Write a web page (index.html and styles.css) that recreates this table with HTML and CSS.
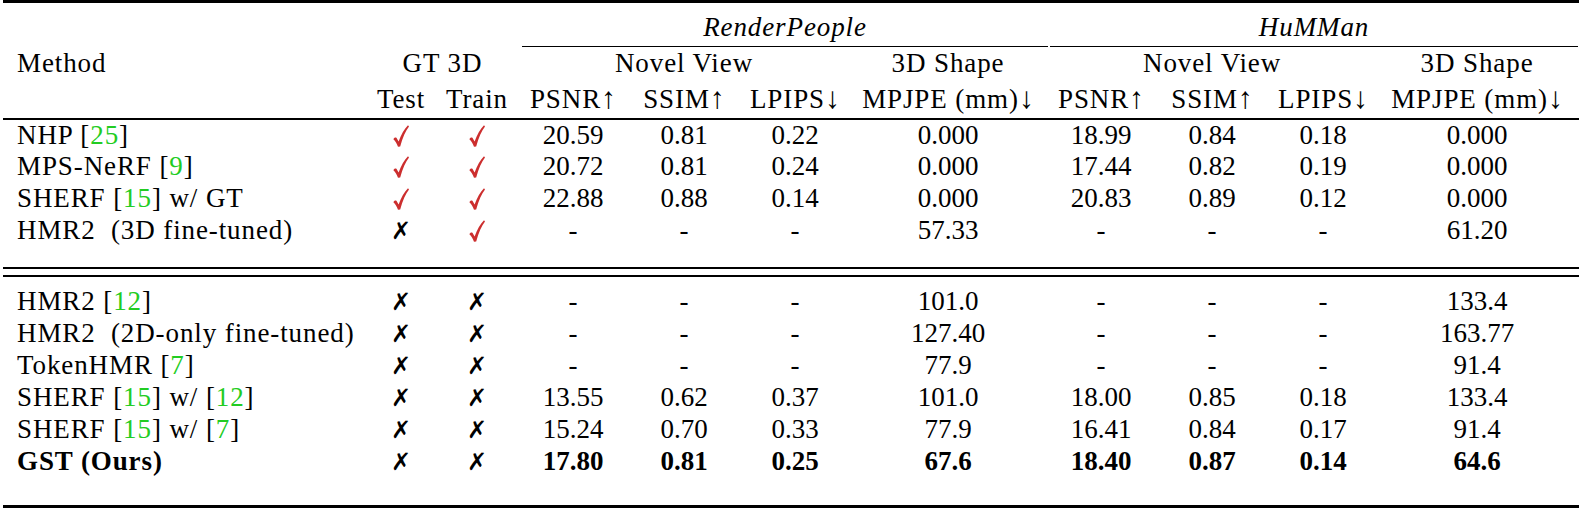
FILE: index.html
```html
<!DOCTYPE html>
<html lang="en">
<head>
    <meta charset="UTF-8">
    <meta name="viewport" content="width=device-width, initial-scale=1.0">
    <title>Novel view and 3D shape results</title>
    <link rel="stylesheet" href="styles.css">
</head>
<body>
    <!-- red check mark, reused in every "yes" cell -->
    <svg class="defs" width="0" height="0">
        <symbol id="check" viewBox="0 0 16 22">
            <path d="M0.4,14.2 C1,12.6 2.6,11.9 3.6,12.9 L5.6,16.4 C8,10 11.2,4.2 15,0.3 L16,1.4 C12.6,5.8 9.6,12.4 7.2,21.4 L5,21.7 C3.8,18.6 2.4,15.8 0.4,14.2 Z"/>
        </symbol>
    </svg>

    <table class="results">
        <colgroup>
            <col class="c-method">
            <col class="c-test">
            <col class="c-train">
            <col class="c-psnr">
            <col class="c-ssim">
            <col class="c-lpips">
            <col class="c-mpjpe">
            <col class="c-psnr">
            <col class="c-ssim">
            <col class="c-lpips">
            <col class="c-mpjpe-last">
        </colgroup>
        <thead>
            <tr class="row-dataset">
                <th colspan="3"></th>
                <th colspan="4" class="dataset"><div>RenderPeople</div></th>
                <th colspan="4" class="dataset"><div>HuMMan</div></th>
            </tr>
            <tr class="row-group">
                <th class="method">Method</th>
                <th colspan="2" class="gt">GT 3D</th>
                <th colspan="3">Novel View</th>
                <th>3D Shape</th>
                <th colspan="3">Novel View</th>
                <th>3D Shape</th>
            </tr>
            <tr class="row-metric">
                <th class="method"></th>
                <th>Test</th>
                <th class="train">Train</th>
                <th>PSNR<span class="arrow">↑</span></th>
                <th>SSIM<span class="arrow">↑</span></th>
                <th>LPIPS<span class="arrow">↓</span></th>
                <th>MPJPE (mm)<span class="arrow">↓</span></th>
                <th>PSNR<span class="arrow">↑</span></th>
                <th>SSIM<span class="arrow">↑</span></th>
                <th>LPIPS<span class="arrow">↓</span></th>
                <th>MPJPE (mm)<span class="arrow">↓</span></th>
            </tr>
        </thead>

        <!-- methods trained with 3D ground truth -->
        <tbody class="block-top">
            <tr>
                <td class="method">NHP [<span class="cite">25</span>]</td>
                <td><svg class="yes"><use href="#check"/></svg></td>
                <td class="train"><svg class="yes"><use href="#check"/></svg></td>
                <td>20.59</td><td>0.81</td><td>0.22</td><td>0.000</td>
                <td>18.99</td><td>0.84</td><td>0.18</td><td>0.000</td>
            </tr>
            <tr>
                <td class="method">MPS-NeRF [<span class="cite">9</span>]</td>
                <td><svg class="yes"><use href="#check"/></svg></td>
                <td class="train"><svg class="yes"><use href="#check"/></svg></td>
                <td>20.72</td><td>0.81</td><td>0.24</td><td>0.000</td>
                <td>17.44</td><td>0.82</td><td>0.19</td><td>0.000</td>
            </tr>
            <tr>
                <td class="method">SHERF [<span class="cite">15</span>] w/ GT</td>
                <td><svg class="yes"><use href="#check"/></svg></td>
                <td class="train"><svg class="yes"><use href="#check"/></svg></td>
                <td>22.88</td><td>0.88</td><td>0.14</td><td>0.000</td>
                <td>20.83</td><td>0.89</td><td>0.12</td><td>0.000</td>
            </tr>
            <tr>
                <td class="method">HMR2&nbsp; (3D fine-tuned)</td>
                <td><span class="no">✗</span></td>
                <td class="train"><svg class="yes"><use href="#check"/></svg></td>
                <td>-</td><td>-</td><td>-</td><td>57.33</td>
                <td>-</td><td>-</td><td>-</td><td>61.20</td>
            </tr>
        </tbody>

        <tbody class="double-rule">
            <tr><td colspan="11"></td></tr>
        </tbody>

        <!-- methods without 3D ground truth -->
        <tbody class="block-bottom">
            <tr>
                <td class="method">HMR2 [<span class="cite">12</span>]</td>
                <td><span class="no">✗</span></td>
                <td class="train"><span class="no">✗</span></td>
                <td>-</td><td>-</td><td>-</td><td>101.0</td>
                <td>-</td><td>-</td><td>-</td><td>133.4</td>
            </tr>
            <tr>
                <td class="method">HMR2&nbsp; (2D-only fine-tuned)</td>
                <td><span class="no">✗</span></td>
                <td class="train"><span class="no">✗</span></td>
                <td>-</td><td>-</td><td>-</td><td>127.40</td>
                <td>-</td><td>-</td><td>-</td><td>163.77</td>
            </tr>
            <tr>
                <td class="method">TokenHMR [<span class="cite">7</span>]</td>
                <td><span class="no">✗</span></td>
                <td class="train"><span class="no">✗</span></td>
                <td>-</td><td>-</td><td>-</td><td>77.9</td>
                <td>-</td><td>-</td><td>-</td><td>91.4</td>
            </tr>
            <tr>
                <td class="method">SHERF [<span class="cite">15</span>] w/ [<span class="cite">12</span>]</td>
                <td><span class="no">✗</span></td>
                <td class="train"><span class="no">✗</span></td>
                <td>13.55</td><td>0.62</td><td>0.37</td><td>101.0</td>
                <td>18.00</td><td>0.85</td><td>0.18</td><td>133.4</td>
            </tr>
            <tr>
                <td class="method">SHERF [<span class="cite">15</span>] w/ [<span class="cite">7</span>]</td>
                <td><span class="no">✗</span></td>
                <td class="train"><span class="no">✗</span></td>
                <td>15.24</td><td>0.70</td><td>0.33</td><td>77.9</td>
                <td>16.41</td><td>0.84</td><td>0.17</td><td>91.4</td>
            </tr>
            <tr class="ours">
                <td class="method">GST (Ours)</td>
                <td><span class="no">✗</span></td>
                <td class="train"><span class="no">✗</span></td>
                <td>17.80</td><td>0.81</td><td>0.25</td><td>67.6</td>
                <td>18.40</td><td>0.87</td><td>0.14</td><td>64.6</td>
            </tr>
        </tbody>
    </table>
</body>
</html>
```

FILE: styles.css
```css
body {
    margin: 0;
    background: white;
    color: black;
    font-family: "Liberation Serif", "Times New Roman", serif;
}

.defs {
    position: absolute;
}

.results {
    margin-left: 3px;
    width: 1576px;
    table-layout: fixed;
    border-collapse: separate;
    border-spacing: 0;
    border-top: 3px solid black;
    border-bottom: 3px solid black;
    font-size: 27px;
}

.c-method { width: 361px; }
.c-test { width: 74px; }
.c-train { width: 83px; }
.c-psnr { width: 104px; }
.c-ssim { width: 118px; }
.c-lpips { width: 104px; }
.c-mpjpe { width: 202px; }
.c-mpjpe-last { width: 204px; }

th, td {
    padding: 0;
    text-align: center;
    white-space: nowrap;
    font-weight: normal;
}

th {
    letter-spacing: 0.9px;
}

.method {
    text-align: left;
    padding-left: 14px;
    letter-spacing: 0.9px;
}

.train {
    padding-right: 5px;
}

.arrow {
    font-size: 30px;
    letter-spacing: 0;
}

/* dataset names with their cmidrules */
.row-dataset th {
    vertical-align: bottom;
}

.dataset {
    padding: 0 1px;
}

.dataset div {
    font-style: italic;
    line-height: 30px;
    padding: 9px 0 4px;
    border-bottom: 1px solid black;
}

.row-group th {
    line-height: 32px;
}

.row-metric th {
    line-height: 32px;
    padding: 3px 0;
    border-bottom: 2px solid black;
}

.row-metric th.method {
    padding-left: 14px;
}

.row-metric th.train {
    padding-right: 5px;
}

tbody td {
    line-height: 32px;
}

.block-top tr:first-child td {
    line-height: 30px;
}

.block-top tr:last-child td {
    padding-bottom: 21px;
}

.double-rule td {
    padding-top: 6px;
    line-height: 0;
    font-size: 0;
    border-top: 2px solid black;
    border-bottom: 2px solid black;
}

.block-bottom tr:first-child td {
    padding-top: 8px;
}

.block-bottom tr:last-child td {
    padding-bottom: 28px;
}

.ours td {
    font-weight: bold;
}

.cite {
    color: #22cc22;
}

.yes {
    width: 16px;
    height: 22px;
    vertical-align: -3px;
    fill: #cc2e2e;
}

.no {
    font-family: "DejaVu Sans", sans-serif;
    font-size: 24px;
    line-height: 0;
}
```
